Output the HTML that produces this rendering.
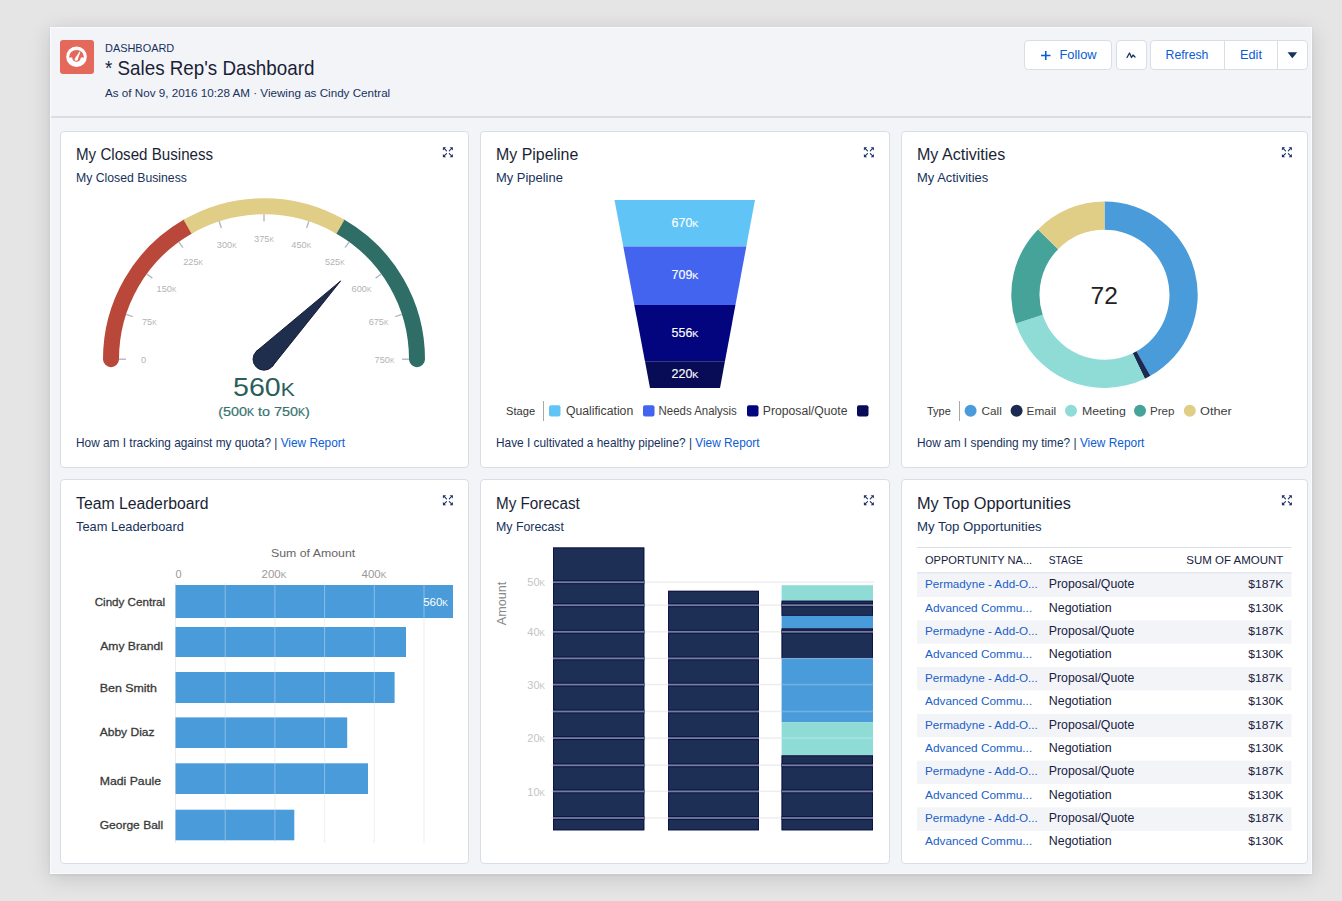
<!DOCTYPE html>
<html><head><meta charset="utf-8"><style>
html,body{margin:0;padding:0;}
body{width:1342px;height:901px;position:relative;overflow:hidden;background:#e6e5e5;font-family:"Liberation Sans", sans-serif;}
svg text{font-family:"Liberation Sans", sans-serif;}
</style></head><body>
<div style="position:absolute;left:50px;top:27px;width:1262px;height:847px;background:#f3f4f8;box-shadow:0 4px 20px rgba(0,0,0,0.15), 0 1px 3px rgba(0,0,0,0.06);border:1px solid #fafbfd;box-sizing:border-box;"></div><div style="position:absolute;left:51px;top:116px;width:1260px;height:2px;background:#d8dde6;"></div><div style="position:absolute;left:51px;top:118px;width:1260px;height:755px;background:#f2f4f7;"></div><div style="position:absolute;left:60px;top:40px;width:34px;height:34px;background:#e4695b;border-radius:3px;"></div><div style="position:absolute;left:1024px;top:40px;width:88px;height:30px;background:#fff;border:1px solid #d8dde6;border-radius:4px;box-sizing:border-box;"></div><div style="position:absolute;left:1116px;top:40px;width:31px;height:30px;background:#fff;border:1px solid #d8dde6;border-radius:4px;box-sizing:border-box;"></div><div style="position:absolute;left:1150px;top:40px;width:158px;height:30px;background:#fff;border:1px solid #d8dde6;border-radius:4px;box-sizing:border-box;"></div><div style="position:absolute;left:1224px;top:40px;width:1px;height:30px;background:#d8dde6;"></div><div style="position:absolute;left:1277px;top:40px;width:1px;height:30px;background:#d8dde6;"></div><div style="position:absolute;left:60px;top:131px;width:409px;height:337px;background:#fff;border:1px solid #d8dde6;border-radius:4px;box-sizing:border-box;"></div><div style="position:absolute;left:480px;top:131px;width:410px;height:337px;background:#fff;border:1px solid #d8dde6;border-radius:4px;box-sizing:border-box;"></div><div style="position:absolute;left:901px;top:131px;width:407px;height:337px;background:#fff;border:1px solid #d8dde6;border-radius:4px;box-sizing:border-box;"></div><div style="position:absolute;left:60px;top:479px;width:409px;height:385px;background:#fff;border:1px solid #d8dde6;border-radius:4px;box-sizing:border-box;"></div><div style="position:absolute;left:480px;top:479px;width:410px;height:385px;background:#fff;border:1px solid #d8dde6;border-radius:4px;box-sizing:border-box;"></div><div style="position:absolute;left:901px;top:479px;width:407px;height:385px;background:#fff;border:1px solid #d8dde6;border-radius:4px;box-sizing:border-box;"></div><div style="position:absolute;left:543px;top:401px;width:1px;height:20px;background:#a8a8a8;"></div><div style="position:absolute;left:959px;top:401px;width:1px;height:20px;background:#a8a8a8;"></div>
<svg width="1342" height="901" viewBox="0 0 1342 901" style="position:absolute;left:0;top:0">
<circle cx="76.5" cy="56.8" r="10.3" fill="#fff"/><path d="M69 57.4 A7.5 7.5 0 0 1 84 57.4 Z" fill="#e4695b"/><circle cx="76.5" cy="57.5" r="4.3" fill="#e4695b"/><path d="M74.87 58.51 L79.64 51.62 L80.36 51.98 L77.53 59.89 Z" fill="#fff"/><circle cx="76.2" cy="59.2" r="1.5" fill="#fff"/><text x="105.00" y="52.30" font-size="10.8" fill="#16325c" text-anchor="start" font-weight="normal" textLength="69.26" lengthAdjust="spacingAndGlyphs" >DASHBOARD</text><text x="105.00" y="75.00" font-size="19.8" fill="#1a1f36" text-anchor="start" font-weight="normal" textLength="209.39" lengthAdjust="spacingAndGlyphs" >* Sales Rep's Dashboard</text><text x="105.00" y="96.90" font-size="11.6" fill="#16325c" text-anchor="start" font-weight="normal" textLength="285.21" lengthAdjust="spacingAndGlyphs" >As of Nov 9, 2016 10:28 AM · Viewing as Cindy Central</text><path d="M1041 55.5 H1050.5 M1045.75 51 V60" stroke="#0b5cd5" stroke-width="1.6"/><text x="1059.50" y="58.60" font-size="12.4" fill="#0b5cd5" text-anchor="start" font-weight="normal" textLength="37.17" lengthAdjust="spacingAndGlyphs" >Follow</text><path d="M1127 57.5 L1129.5 53 L1131.5 57.5 L1133 55 L1135 57" stroke="#16325c" stroke-width="1.3" fill="none" stroke-linejoin="round" stroke-linecap="round"/><text x="1187.00" y="58.60" font-size="12.4" fill="#0b5cd5" text-anchor="middle" font-weight="normal" textLength="42.87" lengthAdjust="spacingAndGlyphs" >Refresh</text><text x="1251.00" y="58.60" font-size="12.4" fill="#0b5cd5" text-anchor="middle" font-weight="normal" textLength="21.87" lengthAdjust="spacingAndGlyphs" >Edit</text><path d="M1287.5 52.3 H1297.2 L1292.35 58.3 Z" fill="#16325c"/><text x="76.00" y="160.00" font-size="15.8" fill="#1a1f36" text-anchor="start" font-weight="normal" textLength="137.11" lengthAdjust="spacingAndGlyphs" >My Closed Business</text><text x="76.00" y="182.30" font-size="12.7" fill="#16325c" text-anchor="start" font-weight="normal" textLength="110.89" lengthAdjust="spacingAndGlyphs" >My Closed Business</text><path d="M446.50 150.80 L444.40 148.70" stroke="#1c2f66" stroke-width="1.1" stroke-linecap="round"/><path d="M442.90 147.20 L446.10 147.20 L442.90 150.40 Z" fill="#1c2f66"/><path d="M449.30 150.80 L451.40 148.70" stroke="#1c2f66" stroke-width="1.1" stroke-linecap="round"/><path d="M452.90 147.20 L449.70 147.20 L452.90 150.40 Z" fill="#1c2f66"/><path d="M446.50 153.60 L444.40 155.70" stroke="#1c2f66" stroke-width="1.1" stroke-linecap="round"/><path d="M442.90 157.20 L446.10 157.20 L442.90 154.00 Z" fill="#1c2f66"/><path d="M449.30 153.60 L451.40 155.70" stroke="#1c2f66" stroke-width="1.1" stroke-linecap="round"/><path d="M452.90 157.20 L449.70 157.20 L452.90 154.00 Z" fill="#1c2f66"/><text x="496.00" y="160.00" font-size="15.8" fill="#1a1f36" text-anchor="start" font-weight="normal" textLength="82.31" lengthAdjust="spacingAndGlyphs" >My Pipeline</text><text x="496.00" y="182.30" font-size="12.7" fill="#16325c" text-anchor="start" font-weight="normal" textLength="66.89" lengthAdjust="spacingAndGlyphs" >My Pipeline</text><path d="M867.50 150.80 L865.40 148.70" stroke="#1c2f66" stroke-width="1.1" stroke-linecap="round"/><path d="M863.90 147.20 L867.10 147.20 L863.90 150.40 Z" fill="#1c2f66"/><path d="M870.30 150.80 L872.40 148.70" stroke="#1c2f66" stroke-width="1.1" stroke-linecap="round"/><path d="M873.90 147.20 L870.70 147.20 L873.90 150.40 Z" fill="#1c2f66"/><path d="M867.50 153.60 L865.40 155.70" stroke="#1c2f66" stroke-width="1.1" stroke-linecap="round"/><path d="M863.90 157.20 L867.10 157.20 L863.90 154.00 Z" fill="#1c2f66"/><path d="M870.30 153.60 L872.40 155.70" stroke="#1c2f66" stroke-width="1.1" stroke-linecap="round"/><path d="M873.90 157.20 L870.70 157.20 L873.90 154.00 Z" fill="#1c2f66"/><text x="917.00" y="160.00" font-size="15.8" fill="#1a1f36" text-anchor="start" font-weight="normal" textLength="88.31" lengthAdjust="spacingAndGlyphs" >My Activities</text><text x="917.00" y="182.30" font-size="12.7" fill="#16325c" text-anchor="start" font-weight="normal" textLength="71.19" lengthAdjust="spacingAndGlyphs" >My Activities</text><path d="M1285.50 150.80 L1283.40 148.70" stroke="#1c2f66" stroke-width="1.1" stroke-linecap="round"/><path d="M1281.90 147.20 L1285.10 147.20 L1281.90 150.40 Z" fill="#1c2f66"/><path d="M1288.30 150.80 L1290.40 148.70" stroke="#1c2f66" stroke-width="1.1" stroke-linecap="round"/><path d="M1291.90 147.20 L1288.70 147.20 L1291.90 150.40 Z" fill="#1c2f66"/><path d="M1285.50 153.60 L1283.40 155.70" stroke="#1c2f66" stroke-width="1.1" stroke-linecap="round"/><path d="M1281.90 157.20 L1285.10 157.20 L1281.90 154.00 Z" fill="#1c2f66"/><path d="M1288.30 153.60 L1290.40 155.70" stroke="#1c2f66" stroke-width="1.1" stroke-linecap="round"/><path d="M1291.90 157.20 L1288.70 157.20 L1291.90 154.00 Z" fill="#1c2f66"/><text x="76.00" y="508.90" font-size="15.8" fill="#1a1f36" text-anchor="start" font-weight="normal" textLength="132.51" lengthAdjust="spacingAndGlyphs" >Team Leaderboard</text><text x="76.00" y="531.20" font-size="12.7" fill="#16325c" text-anchor="start" font-weight="normal" textLength="107.89" lengthAdjust="spacingAndGlyphs" >Team Leaderboard</text><path d="M446.50 498.80 L444.40 496.70" stroke="#1c2f66" stroke-width="1.1" stroke-linecap="round"/><path d="M442.90 495.20 L446.10 495.20 L442.90 498.40 Z" fill="#1c2f66"/><path d="M449.30 498.80 L451.40 496.70" stroke="#1c2f66" stroke-width="1.1" stroke-linecap="round"/><path d="M452.90 495.20 L449.70 495.20 L452.90 498.40 Z" fill="#1c2f66"/><path d="M446.50 501.60 L444.40 503.70" stroke="#1c2f66" stroke-width="1.1" stroke-linecap="round"/><path d="M442.90 505.20 L446.10 505.20 L442.90 502.00 Z" fill="#1c2f66"/><path d="M449.30 501.60 L451.40 503.70" stroke="#1c2f66" stroke-width="1.1" stroke-linecap="round"/><path d="M452.90 505.20 L449.70 505.20 L452.90 502.00 Z" fill="#1c2f66"/><text x="496.00" y="508.90" font-size="15.8" fill="#1a1f36" text-anchor="start" font-weight="normal" textLength="83.81" lengthAdjust="spacingAndGlyphs" >My Forecast</text><text x="496.00" y="531.20" font-size="12.7" fill="#16325c" text-anchor="start" font-weight="normal" textLength="67.99" lengthAdjust="spacingAndGlyphs" >My Forecast</text><path d="M867.50 498.80 L865.40 496.70" stroke="#1c2f66" stroke-width="1.1" stroke-linecap="round"/><path d="M863.90 495.20 L867.10 495.20 L863.90 498.40 Z" fill="#1c2f66"/><path d="M870.30 498.80 L872.40 496.70" stroke="#1c2f66" stroke-width="1.1" stroke-linecap="round"/><path d="M873.90 495.20 L870.70 495.20 L873.90 498.40 Z" fill="#1c2f66"/><path d="M867.50 501.60 L865.40 503.70" stroke="#1c2f66" stroke-width="1.1" stroke-linecap="round"/><path d="M863.90 505.20 L867.10 505.20 L863.90 502.00 Z" fill="#1c2f66"/><path d="M870.30 501.60 L872.40 503.70" stroke="#1c2f66" stroke-width="1.1" stroke-linecap="round"/><path d="M873.90 505.20 L870.70 505.20 L873.90 502.00 Z" fill="#1c2f66"/><text x="917.00" y="508.90" font-size="15.8" fill="#1a1f36" text-anchor="start" font-weight="normal" textLength="153.91" lengthAdjust="spacingAndGlyphs" >My Top Opportunities</text><text x="917.00" y="531.20" font-size="12.7" fill="#16325c" text-anchor="start" font-weight="normal" textLength="124.59" lengthAdjust="spacingAndGlyphs" >My Top Opportunities</text><path d="M1285.50 498.80 L1283.40 496.70" stroke="#1c2f66" stroke-width="1.1" stroke-linecap="round"/><path d="M1281.90 495.20 L1285.10 495.20 L1281.90 498.40 Z" fill="#1c2f66"/><path d="M1288.30 498.80 L1290.40 496.70" stroke="#1c2f66" stroke-width="1.1" stroke-linecap="round"/><path d="M1291.90 495.20 L1288.70 495.20 L1291.90 498.40 Z" fill="#1c2f66"/><path d="M1285.50 501.60 L1283.40 503.70" stroke="#1c2f66" stroke-width="1.1" stroke-linecap="round"/><path d="M1281.90 505.20 L1285.10 505.20 L1281.90 502.00 Z" fill="#1c2f66"/><path d="M1288.30 501.60 L1290.40 503.70" stroke="#1c2f66" stroke-width="1.1" stroke-linecap="round"/><path d="M1291.90 505.20 L1288.70 505.20 L1291.90 502.00 Z" fill="#1c2f66"/><path d="M111.00 359.20 A153 153 0 0 1 187.50 226.70" stroke="#b9483a" stroke-width="16" fill="none" stroke-linecap="round"/><path d="M340.50 226.70 A153 153 0 0 1 417.00 359.20" stroke="#2e6e67" stroke-width="16" fill="none" stroke-linecap="round"/><path d="M187.50 226.70 A153 153 0 0 1 340.50 226.70" stroke="#e0cd86" stroke-width="16" fill="none" stroke-linecap="butt"/><path d="M119.00 359.20 L126.00 359.20" stroke="#b4b7bf" stroke-width="1.4"/><text x="143.50" y="362.60" font-size="9.2" fill="#b3b3b3" text-anchor="middle" font-weight="normal"  >0</text><path d="M126.10 314.39 L132.75 316.56" stroke="#b4b7bf" stroke-width="1.4"/><text x="149.40" y="325.36" font-size="9.2" fill="#b3b3b3" text-anchor="middle" font-weight="normal"  >75<tspan font-size="6.81">K</tspan></text><path d="M146.69 273.97 L152.36 278.09" stroke="#b4b7bf" stroke-width="1.4"/><text x="166.51" y="291.77" font-size="9.2" fill="#b3b3b3" text-anchor="middle" font-weight="normal"  >150<tspan font-size="6.81">K</tspan></text><path d="M178.77 241.89 L182.89 247.56" stroke="#b4b7bf" stroke-width="1.4"/><text x="193.17" y="265.11" font-size="9.2" fill="#b3b3b3" text-anchor="middle" font-weight="normal"  >225<tspan font-size="6.81">K</tspan></text><path d="M219.19 221.30 L221.36 227.95" stroke="#b4b7bf" stroke-width="1.4"/><text x="226.76" y="248.00" font-size="9.2" fill="#b3b3b3" text-anchor="middle" font-weight="normal"  >300<tspan font-size="6.81">K</tspan></text><path d="M264.00 214.20 L264.00 221.20" stroke="#b4b7bf" stroke-width="1.4"/><text x="264.00" y="242.10" font-size="9.2" fill="#b3b3b3" text-anchor="middle" font-weight="normal"  >375<tspan font-size="6.81">K</tspan></text><path d="M308.81 221.30 L306.64 227.95" stroke="#b4b7bf" stroke-width="1.4"/><text x="301.24" y="248.00" font-size="9.2" fill="#b3b3b3" text-anchor="middle" font-weight="normal"  >450<tspan font-size="6.81">K</tspan></text><path d="M349.23 241.89 L345.11 247.56" stroke="#b4b7bf" stroke-width="1.4"/><text x="334.83" y="265.11" font-size="9.2" fill="#b3b3b3" text-anchor="middle" font-weight="normal"  >525<tspan font-size="6.81">K</tspan></text><path d="M381.31 273.97 L375.64 278.09" stroke="#b4b7bf" stroke-width="1.4"/><text x="361.49" y="291.77" font-size="9.2" fill="#b3b3b3" text-anchor="middle" font-weight="normal"  >600<tspan font-size="6.81">K</tspan></text><path d="M401.90 314.39 L395.25 316.56" stroke="#b4b7bf" stroke-width="1.4"/><text x="378.60" y="325.36" font-size="9.2" fill="#b3b3b3" text-anchor="middle" font-weight="normal"  >675<tspan font-size="6.81">K</tspan></text><path d="M409.00 359.20 L402.00 359.20" stroke="#b4b7bf" stroke-width="1.4"/><text x="384.50" y="362.60" font-size="9.2" fill="#b3b3b3" text-anchor="middle" font-weight="normal"  >750<tspan font-size="6.81">K</tspan></text><circle cx="264" cy="359.2" r="11" fill="#1f2e4d" stroke="#0e1430" stroke-width="0.9"/><path d="M271.86 366.90 L340.61 280.97 L256.14 351.50" fill="#1f2e4d" stroke="#0e1430" stroke-width="0.9" stroke-linejoin="round"/><circle cx="264" cy="359.2" r="10.55" fill="#1f2e4d"/><text x="264.00" y="396.40" font-size="26" fill="#2b5e5a" text-anchor="middle" font-weight="normal" textLength="61.82" lengthAdjust="spacingAndGlyphs" >560<tspan font-size="19.24">K</tspan></text><text x="264.00" y="416.40" font-size="13.6" fill="#36736f" text-anchor="middle" font-weight="normal" textLength="91.55" lengthAdjust="spacingAndGlyphs" stroke="#36736f" stroke-width="0.2">(500<tspan font-size="10.06">K</tspan> to 750<tspan font-size="10.06">K</tspan>)</text><text x="76" y="446.8" font-size="12.2" fill="#16325c" textLength="269" lengthAdjust="spacingAndGlyphs">How am I tracking against my quota? | <tspan fill="#0b5cd5">View Report</tspan></text><path d="M614.50 200 L755.00 200 L746.32 246.6 L623.30 246.6 Z" fill="#61c4f6"/><text x="685.00" y="226.70" font-size="12.8" fill="#ffffff" text-anchor="middle" font-weight="normal" textLength="26.90" lengthAdjust="spacingAndGlyphs" stroke="#ffffff" stroke-width="0.15">670<tspan font-size="9.47">K</tspan></text><path d="M623.30 246.6 L746.32 246.6 L735.45 305 L634.33 305 Z" fill="#4264ef"/><text x="685.00" y="279.20" font-size="12.8" fill="#ffffff" text-anchor="middle" font-weight="normal" textLength="26.90" lengthAdjust="spacingAndGlyphs" stroke="#ffffff" stroke-width="0.15">709<tspan font-size="9.47">K</tspan></text><path d="M634.33 305 L735.45 305 L724.97 361.3 L644.96 361.3 Z" fill="#03057f"/><text x="685.00" y="336.55" font-size="12.8" fill="#ffffff" text-anchor="middle" font-weight="normal" textLength="26.90" lengthAdjust="spacingAndGlyphs" stroke="#ffffff" stroke-width="0.15">556<tspan font-size="9.47">K</tspan></text><path d="M644.96 361.3 L724.97 361.3 L720.00 388 L650.00 388 Z" fill="#080b55"/><text x="685.00" y="378.05" font-size="12.8" fill="#ffffff" text-anchor="middle" font-weight="normal" textLength="26.90" lengthAdjust="spacingAndGlyphs" stroke="#ffffff" stroke-width="0.15">220<tspan font-size="9.47">K</tspan></text><text x="506.00" y="415.20" font-size="11" fill="#333333" text-anchor="start" font-weight="normal" textLength="29.07" lengthAdjust="spacingAndGlyphs" >Stage</text><rect x="549" y="405.3" width="11.5" height="11.3" rx="2" fill="#61c4f6"/><text x="565.90" y="415.20" font-size="12" fill="#3e3e3c" text-anchor="start" font-weight="normal" textLength="67.34" lengthAdjust="spacingAndGlyphs" >Qualification</text><rect x="643" y="405.3" width="11.5" height="11.3" rx="2" fill="#4264ef"/><text x="658.60" y="415.20" font-size="12" fill="#3e3e3c" text-anchor="start" font-weight="normal" textLength="78.14" lengthAdjust="spacingAndGlyphs" >Needs Analysis</text><rect x="747" y="405.3" width="11.5" height="11.3" rx="2" fill="#03057f"/><text x="762.80" y="415.20" font-size="12" fill="#3e3e3c" text-anchor="start" font-weight="normal" textLength="84.64" lengthAdjust="spacingAndGlyphs" >Proposal/Quote</text><rect x="857" y="405.3" width="11.5" height="11.3" rx="2" fill="#080b55"/><text x="496" y="446.8" font-size="12.2" fill="#16325c" textLength="263.6" lengthAdjust="spacingAndGlyphs">Have I cultivated a healthy pipeline? | <tspan fill="#0b5cd5">View Report</tspan></text><path d="M1104.50 201.50 A93.2 93.2 0 0 1 1150.39 375.82 L1136.51 351.27 A65 65 0 0 0 1104.50 229.70 Z" fill="#4a9bd9"/><path d="M1150.39 375.82 A93.2 93.2 0 0 1 1144.92 378.68 L1132.69 353.27 A65 65 0 0 0 1136.51 351.27 Z" fill="#1b2a50"/><path d="M1144.92 378.68 A93.2 93.2 0 0 1 1015.86 323.50 L1042.68 314.79 A65 65 0 0 0 1132.69 353.27 Z" fill="#8fdbd6"/><path d="M1015.86 323.50 A93.2 93.2 0 0 1 1038.03 229.38 L1058.14 249.14 A65 65 0 0 0 1042.68 314.79 Z" fill="#45a39a"/><path d="M1038.03 229.38 A93.2 93.2 0 0 1 1104.50 201.50 L1104.50 229.70 A65 65 0 0 0 1058.14 249.14 Z" fill="#e0cd86"/><text x="1104.20" y="303.70" font-size="23" fill="#222222" text-anchor="middle" font-weight="normal" textLength="27.21" lengthAdjust="spacingAndGlyphs" >72</text><text x="927.00" y="415.20" font-size="11" fill="#333333" text-anchor="start" font-weight="normal" textLength="23.77" lengthAdjust="spacingAndGlyphs" >Type</text><circle cx="970.6" cy="410.8" r="6" fill="#4a9bd9"/><text x="981.60" y="415.20" font-size="11.8" fill="#3e3e3c" text-anchor="start" font-weight="normal" textLength="20.23" lengthAdjust="spacingAndGlyphs" >Call</text><circle cx="1016.6" cy="410.8" r="6" fill="#1b2a50"/><text x="1026.60" y="415.20" font-size="11.8" fill="#3e3e3c" text-anchor="start" font-weight="normal" textLength="29.63" lengthAdjust="spacingAndGlyphs" >Email</text><circle cx="1071" cy="410.8" r="6" fill="#8fdbd6"/><text x="1082.00" y="415.20" font-size="11.8" fill="#3e3e3c" text-anchor="start" font-weight="normal" textLength="43.83" lengthAdjust="spacingAndGlyphs" >Meeting</text><circle cx="1140" cy="410.8" r="6" fill="#45a39a"/><text x="1149.90" y="415.20" font-size="11.8" fill="#3e3e3c" text-anchor="start" font-weight="normal" textLength="24.53" lengthAdjust="spacingAndGlyphs" >Prep</text><circle cx="1189.8" cy="410.8" r="6" fill="#e0cd86"/><text x="1200.00" y="415.20" font-size="11.8" fill="#3e3e3c" text-anchor="start" font-weight="normal" textLength="31.83" lengthAdjust="spacingAndGlyphs" >Other</text><text x="917" y="446.8" font-size="12.2" fill="#16325c" textLength="227.4" lengthAdjust="spacingAndGlyphs">How am I spending my time? | <tspan fill="#0b5cd5">View Report</tspan></text><text x="313.10" y="557.00" font-size="11.8" fill="#666666" text-anchor="middle" font-weight="normal" textLength="84.23" lengthAdjust="spacingAndGlyphs" >Sum of Amount</text><text x="178.50" y="577.80" font-size="11" fill="#999999" text-anchor="middle" font-weight="normal"  >0</text><text x="274.00" y="577.80" font-size="11.5" fill="#999999" text-anchor="middle" font-weight="normal"  >200<tspan font-size="8.51">K</tspan></text><text x="374.00" y="577.80" font-size="11.5" fill="#999999" text-anchor="middle" font-weight="normal"  >400<tspan font-size="8.51">K</tspan></text><rect x="175.00" y="583" width="1" height="260" fill="#ececec"/><rect x="224.70" y="583" width="1" height="260" fill="#ececec"/><rect x="274.40" y="583" width="1" height="260" fill="#ececec"/><rect x="324.10" y="583" width="1" height="260" fill="#ececec"/><rect x="373.80" y="583" width="1" height="260" fill="#ececec"/><rect x="423.50" y="583" width="1" height="260" fill="#ececec"/><rect x="175.5" y="585" width="277.50" height="33.00" fill="#4a9bd9"/><text x="94.70" y="606.30" font-size="11.6" fill="#3a3a3a" text-anchor="start" font-weight="normal" textLength="70.41" lengthAdjust="spacingAndGlyphs" stroke="#3a3a3a" stroke-width="0.3">Cindy Central</text><rect x="175.5" y="627" width="230.50" height="30.00" fill="#4a9bd9"/><text x="100.20" y="649.50" font-size="11.6" fill="#3a3a3a" text-anchor="start" font-weight="normal" textLength="62.81" lengthAdjust="spacingAndGlyphs" stroke="#3a3a3a" stroke-width="0.3">Amy Brandl</text><rect x="175.5" y="672" width="219.10" height="31.00" fill="#4a9bd9"/><text x="99.70" y="692.10" font-size="11.6" fill="#3a3a3a" text-anchor="start" font-weight="normal" textLength="57.31" lengthAdjust="spacingAndGlyphs" stroke="#3a3a3a" stroke-width="0.3">Ben Smith</text><rect x="175.5" y="717.4" width="171.70" height="30.60" fill="#4a9bd9"/><text x="99.70" y="736.40" font-size="11.6" fill="#3a3a3a" text-anchor="start" font-weight="normal" textLength="54.91" lengthAdjust="spacingAndGlyphs" stroke="#3a3a3a" stroke-width="0.3">Abby Diaz</text><rect x="175.5" y="763.3" width="192.50" height="30.70" fill="#4a9bd9"/><text x="99.70" y="785.30" font-size="11.6" fill="#3a3a3a" text-anchor="start" font-weight="normal" textLength="61.31" lengthAdjust="spacingAndGlyphs" stroke="#3a3a3a" stroke-width="0.3">Madi Paule</text><rect x="175.5" y="809.7" width="118.80" height="30.60" fill="#4a9bd9"/><text x="99.70" y="829.00" font-size="11.6" fill="#3a3a3a" text-anchor="start" font-weight="normal" textLength="63.51" lengthAdjust="spacingAndGlyphs" stroke="#3a3a3a" stroke-width="0.3">George Ball</text><rect x="224.70" y="583" width="1" height="260" fill="rgba(255,255,255,0.35)"/><rect x="274.40" y="583" width="1" height="260" fill="rgba(255,255,255,0.35)"/><rect x="324.10" y="583" width="1" height="260" fill="rgba(255,255,255,0.35)"/><rect x="373.80" y="583" width="1" height="260" fill="rgba(255,255,255,0.35)"/><rect x="423.50" y="583" width="1" height="260" fill="rgba(255,255,255,0.35)"/><text x="448.00" y="606.00" font-size="11.5" fill="#ffffff" text-anchor="end" font-weight="normal"  >560<tspan font-size="8.51">K</tspan></text><rect x="551" y="581.40" width="323" height="1.5" fill="#eeeeee"/><rect x="551" y="604.40" width="323" height="1.5" fill="#eeeeee"/><rect x="551" y="631.00" width="323" height="1.5" fill="#eeeeee"/><rect x="551" y="657.60" width="323" height="1.5" fill="#eeeeee"/><rect x="551" y="683.80" width="323" height="1.5" fill="#eeeeee"/><rect x="551" y="710.70" width="323" height="1.5" fill="#eeeeee"/><rect x="551" y="737.30" width="323" height="1.5" fill="#eeeeee"/><rect x="551" y="764.50" width="323" height="1.5" fill="#eeeeee"/><rect x="551" y="790.60" width="323" height="1.5" fill="#eeeeee"/><rect x="551" y="817.20" width="323" height="1.5" fill="#eeeeee"/><text x="545.00" y="586.40" font-size="11" fill="#c3c3c3" text-anchor="end" font-weight="normal"  >50<tspan font-size="8.14">K</tspan></text><text x="545.00" y="636.00" font-size="11" fill="#c3c3c3" text-anchor="end" font-weight="normal"  >40<tspan font-size="8.14">K</tspan></text><text x="545.00" y="688.80" font-size="11" fill="#c3c3c3" text-anchor="end" font-weight="normal"  >30<tspan font-size="8.14">K</tspan></text><text x="545.00" y="742.30" font-size="11" fill="#c3c3c3" text-anchor="end" font-weight="normal"  >20<tspan font-size="8.14">K</tspan></text><text x="545.00" y="795.60" font-size="11" fill="#c3c3c3" text-anchor="end" font-weight="normal"  >10<tspan font-size="8.14">K</tspan></text><text x="0" y="0" font-size="12.3" fill="#888888" text-anchor="middle" textLength="43.5" lengthAdjust="spacingAndGlyphs" transform="translate(505.5 603.5) rotate(-90)">Amount</text><rect x="553" y="547.5" width="91.30" height="282.80" fill="#1e2f56"/><rect x="553.50" y="548.00" width="90.30" height="281.80" fill="none" stroke="#0d1548" stroke-width="1"/><rect x="668" y="590.8" width="91.00" height="239.50" fill="#1e2f56"/><rect x="668.50" y="591.30" width="90.00" height="238.50" fill="none" stroke="#0d1548" stroke-width="1"/><rect x="781.6" y="585.2" width="91.40" height="15.50" fill="#8fdbd6"/><rect x="781.6" y="600.7" width="91.40" height="15.20" fill="#1e2f56"/><rect x="782.10" y="601.20" width="90.40" height="14.20" fill="none" stroke="#0d1548" stroke-width="1"/><rect x="781.6" y="615.9" width="91.40" height="12.50" fill="#4a9bd9"/><rect x="781.6" y="628.4" width="91.40" height="29.90" fill="#1e2f56"/><rect x="782.10" y="628.90" width="90.40" height="28.90" fill="none" stroke="#0d1548" stroke-width="1"/><rect x="781.6" y="658.3" width="91.40" height="64.00" fill="#4a9bd9"/><rect x="781.6" y="722.3" width="91.40" height="33.10" fill="#8fdbd6"/><rect x="781.6" y="755.4" width="91.40" height="74.90" fill="#1e2f56"/><rect x="782.10" y="755.90" width="90.40" height="73.90" fill="none" stroke="#0d1548" stroke-width="1"/><rect x="553" y="580.20" width="91.30" height="4" fill="#0d1548"/><rect x="553" y="581.30" width="91.30" height="1.8" fill="#747e98"/><rect x="553" y="603.20" width="91.30" height="4" fill="#0d1548"/><rect x="553" y="604.30" width="91.30" height="1.8" fill="#747e98"/><rect x="668" y="603.20" width="91.00" height="4" fill="#0d1548"/><rect x="668" y="604.30" width="91.00" height="1.8" fill="#747e98"/><rect x="781.6" y="603.20" width="91.40" height="4" fill="#0d1548"/><rect x="781.6" y="604.30" width="91.40" height="1.8" fill="#747e98"/><rect x="553" y="629.80" width="91.30" height="4" fill="#0d1548"/><rect x="553" y="630.90" width="91.30" height="1.8" fill="#747e98"/><rect x="668" y="629.80" width="91.00" height="4" fill="#0d1548"/><rect x="668" y="630.90" width="91.00" height="1.8" fill="#747e98"/><rect x="781.6" y="629.80" width="91.40" height="4" fill="#0d1548"/><rect x="781.6" y="630.90" width="91.40" height="1.8" fill="#747e98"/><rect x="553" y="656.40" width="91.30" height="4" fill="#0d1548"/><rect x="553" y="657.50" width="91.30" height="1.8" fill="#747e98"/><rect x="668" y="656.40" width="91.00" height="4" fill="#0d1548"/><rect x="668" y="657.50" width="91.00" height="1.8" fill="#747e98"/><rect x="781.6" y="657.60" width="91.40" height="1.6" fill="rgba(255,255,255,0.22)"/><rect x="553" y="682.60" width="91.30" height="4" fill="#0d1548"/><rect x="553" y="683.70" width="91.30" height="1.8" fill="#747e98"/><rect x="668" y="682.60" width="91.00" height="4" fill="#0d1548"/><rect x="668" y="683.70" width="91.00" height="1.8" fill="#747e98"/><rect x="781.6" y="683.80" width="91.40" height="1.6" fill="rgba(255,255,255,0.22)"/><rect x="553" y="709.50" width="91.30" height="4" fill="#0d1548"/><rect x="553" y="710.60" width="91.30" height="1.8" fill="#747e98"/><rect x="668" y="709.50" width="91.00" height="4" fill="#0d1548"/><rect x="668" y="710.60" width="91.00" height="1.8" fill="#747e98"/><rect x="781.6" y="710.70" width="91.40" height="1.6" fill="rgba(255,255,255,0.22)"/><rect x="553" y="736.10" width="91.30" height="4" fill="#0d1548"/><rect x="553" y="737.20" width="91.30" height="1.8" fill="#747e98"/><rect x="668" y="736.10" width="91.00" height="4" fill="#0d1548"/><rect x="668" y="737.20" width="91.00" height="1.8" fill="#747e98"/><rect x="781.6" y="737.30" width="91.40" height="1.6" fill="rgba(255,255,255,0.22)"/><rect x="553" y="763.30" width="91.30" height="4" fill="#0d1548"/><rect x="553" y="764.40" width="91.30" height="1.8" fill="#747e98"/><rect x="668" y="763.30" width="91.00" height="4" fill="#0d1548"/><rect x="668" y="764.40" width="91.00" height="1.8" fill="#747e98"/><rect x="781.6" y="763.30" width="91.40" height="4" fill="#0d1548"/><rect x="781.6" y="764.40" width="91.40" height="1.8" fill="#747e98"/><rect x="553" y="789.40" width="91.30" height="4" fill="#0d1548"/><rect x="553" y="790.50" width="91.30" height="1.8" fill="#747e98"/><rect x="668" y="789.40" width="91.00" height="4" fill="#0d1548"/><rect x="668" y="790.50" width="91.00" height="1.8" fill="#747e98"/><rect x="781.6" y="789.40" width="91.40" height="4" fill="#0d1548"/><rect x="781.6" y="790.50" width="91.40" height="1.8" fill="#747e98"/><rect x="553" y="816.00" width="91.30" height="4" fill="#0d1548"/><rect x="553" y="817.10" width="91.30" height="1.8" fill="#747e98"/><rect x="668" y="816.00" width="91.00" height="4" fill="#0d1548"/><rect x="668" y="817.10" width="91.00" height="1.8" fill="#747e98"/><rect x="781.6" y="816.00" width="91.40" height="4" fill="#0d1548"/><rect x="781.6" y="817.10" width="91.40" height="1.8" fill="#747e98"/><rect x="917" y="547" width="374.5" height="1" fill="#d8dde6"/><rect x="917" y="572.3" width="374.5" height="1.4" fill="#d8dde6"/><text x="925.00" y="564.30" font-size="11" fill="#16213e" text-anchor="start" font-weight="normal" textLength="107.17" lengthAdjust="spacingAndGlyphs" >OPPORTUNITY NA...</text><text x="1048.80" y="564.30" font-size="10.6" fill="#16213e" text-anchor="start" font-weight="normal" textLength="33.94" lengthAdjust="spacingAndGlyphs" >STAGE</text><text x="1283.30" y="564.30" font-size="11.2" fill="#16213e" text-anchor="end" font-weight="normal" textLength="97.08" lengthAdjust="spacingAndGlyphs" >SUM OF AMOUNT</text><rect x="917" y="573.50" width="374.5" height="23.39" fill="#f3f4f8"/><text x="925.00" y="588.20" font-size="11.6" fill="#1b5fc7" text-anchor="start" font-weight="normal" textLength="112.81" lengthAdjust="spacingAndGlyphs" >Permadyne - Add-O...</text><text x="1048.80" y="588.20" font-size="12.1" fill="#16213e" text-anchor="start" font-weight="normal" textLength="85.55" lengthAdjust="spacingAndGlyphs" >Proposal/Quote</text><text x="1283.30" y="588.20" font-size="11.8" fill="#16213e" text-anchor="end" font-weight="normal" textLength="35.13" lengthAdjust="spacingAndGlyphs" >$187K</text><text x="925.00" y="611.59" font-size="11.6" fill="#1b5fc7" text-anchor="start" font-weight="normal" textLength="107.21" lengthAdjust="spacingAndGlyphs" >Advanced Commu...</text><text x="1048.80" y="611.59" font-size="12.1" fill="#16213e" text-anchor="start" font-weight="normal" textLength="62.85" lengthAdjust="spacingAndGlyphs" >Negotiation</text><text x="1283.30" y="611.59" font-size="11.8" fill="#16213e" text-anchor="end" font-weight="normal" textLength="35.13" lengthAdjust="spacingAndGlyphs" >$130K</text><rect x="917" y="620.28" width="374.5" height="23.39" fill="#f3f4f8"/><text x="925.00" y="634.98" font-size="11.6" fill="#1b5fc7" text-anchor="start" font-weight="normal" textLength="112.81" lengthAdjust="spacingAndGlyphs" >Permadyne - Add-O...</text><text x="1048.80" y="634.98" font-size="12.1" fill="#16213e" text-anchor="start" font-weight="normal" textLength="85.55" lengthAdjust="spacingAndGlyphs" >Proposal/Quote</text><text x="1283.30" y="634.98" font-size="11.8" fill="#16213e" text-anchor="end" font-weight="normal" textLength="35.13" lengthAdjust="spacingAndGlyphs" >$187K</text><text x="925.00" y="658.37" font-size="11.6" fill="#1b5fc7" text-anchor="start" font-weight="normal" textLength="107.21" lengthAdjust="spacingAndGlyphs" >Advanced Commu...</text><text x="1048.80" y="658.37" font-size="12.1" fill="#16213e" text-anchor="start" font-weight="normal" textLength="62.85" lengthAdjust="spacingAndGlyphs" >Negotiation</text><text x="1283.30" y="658.37" font-size="11.8" fill="#16213e" text-anchor="end" font-weight="normal" textLength="35.13" lengthAdjust="spacingAndGlyphs" >$130K</text><rect x="917" y="667.06" width="374.5" height="23.39" fill="#f3f4f8"/><text x="925.00" y="681.76" font-size="11.6" fill="#1b5fc7" text-anchor="start" font-weight="normal" textLength="112.81" lengthAdjust="spacingAndGlyphs" >Permadyne - Add-O...</text><text x="1048.80" y="681.76" font-size="12.1" fill="#16213e" text-anchor="start" font-weight="normal" textLength="85.55" lengthAdjust="spacingAndGlyphs" >Proposal/Quote</text><text x="1283.30" y="681.76" font-size="11.8" fill="#16213e" text-anchor="end" font-weight="normal" textLength="35.13" lengthAdjust="spacingAndGlyphs" >$187K</text><text x="925.00" y="705.15" font-size="11.6" fill="#1b5fc7" text-anchor="start" font-weight="normal" textLength="107.21" lengthAdjust="spacingAndGlyphs" >Advanced Commu...</text><text x="1048.80" y="705.15" font-size="12.1" fill="#16213e" text-anchor="start" font-weight="normal" textLength="62.85" lengthAdjust="spacingAndGlyphs" >Negotiation</text><text x="1283.30" y="705.15" font-size="11.8" fill="#16213e" text-anchor="end" font-weight="normal" textLength="35.13" lengthAdjust="spacingAndGlyphs" >$130K</text><rect x="917" y="713.84" width="374.5" height="23.39" fill="#f3f4f8"/><text x="925.00" y="728.54" font-size="11.6" fill="#1b5fc7" text-anchor="start" font-weight="normal" textLength="112.81" lengthAdjust="spacingAndGlyphs" >Permadyne - Add-O...</text><text x="1048.80" y="728.54" font-size="12.1" fill="#16213e" text-anchor="start" font-weight="normal" textLength="85.55" lengthAdjust="spacingAndGlyphs" >Proposal/Quote</text><text x="1283.30" y="728.54" font-size="11.8" fill="#16213e" text-anchor="end" font-weight="normal" textLength="35.13" lengthAdjust="spacingAndGlyphs" >$187K</text><text x="925.00" y="751.93" font-size="11.6" fill="#1b5fc7" text-anchor="start" font-weight="normal" textLength="107.21" lengthAdjust="spacingAndGlyphs" >Advanced Commu...</text><text x="1048.80" y="751.93" font-size="12.1" fill="#16213e" text-anchor="start" font-weight="normal" textLength="62.85" lengthAdjust="spacingAndGlyphs" >Negotiation</text><text x="1283.30" y="751.93" font-size="11.8" fill="#16213e" text-anchor="end" font-weight="normal" textLength="35.13" lengthAdjust="spacingAndGlyphs" >$130K</text><rect x="917" y="760.62" width="374.5" height="23.39" fill="#f3f4f8"/><text x="925.00" y="775.32" font-size="11.6" fill="#1b5fc7" text-anchor="start" font-weight="normal" textLength="112.81" lengthAdjust="spacingAndGlyphs" >Permadyne - Add-O...</text><text x="1048.80" y="775.32" font-size="12.1" fill="#16213e" text-anchor="start" font-weight="normal" textLength="85.55" lengthAdjust="spacingAndGlyphs" >Proposal/Quote</text><text x="1283.30" y="775.32" font-size="11.8" fill="#16213e" text-anchor="end" font-weight="normal" textLength="35.13" lengthAdjust="spacingAndGlyphs" >$187K</text><text x="925.00" y="798.71" font-size="11.6" fill="#1b5fc7" text-anchor="start" font-weight="normal" textLength="107.21" lengthAdjust="spacingAndGlyphs" >Advanced Commu...</text><text x="1048.80" y="798.71" font-size="12.1" fill="#16213e" text-anchor="start" font-weight="normal" textLength="62.85" lengthAdjust="spacingAndGlyphs" >Negotiation</text><text x="1283.30" y="798.71" font-size="11.8" fill="#16213e" text-anchor="end" font-weight="normal" textLength="35.13" lengthAdjust="spacingAndGlyphs" >$130K</text><rect x="917" y="807.40" width="374.5" height="23.39" fill="#f3f4f8"/><text x="925.00" y="822.10" font-size="11.6" fill="#1b5fc7" text-anchor="start" font-weight="normal" textLength="112.81" lengthAdjust="spacingAndGlyphs" >Permadyne - Add-O...</text><text x="1048.80" y="822.10" font-size="12.1" fill="#16213e" text-anchor="start" font-weight="normal" textLength="85.55" lengthAdjust="spacingAndGlyphs" >Proposal/Quote</text><text x="1283.30" y="822.10" font-size="11.8" fill="#16213e" text-anchor="end" font-weight="normal" textLength="35.13" lengthAdjust="spacingAndGlyphs" >$187K</text><text x="925.00" y="845.49" font-size="11.6" fill="#1b5fc7" text-anchor="start" font-weight="normal" textLength="107.21" lengthAdjust="spacingAndGlyphs" >Advanced Commu...</text><text x="1048.80" y="845.49" font-size="12.1" fill="#16213e" text-anchor="start" font-weight="normal" textLength="62.85" lengthAdjust="spacingAndGlyphs" >Negotiation</text><text x="1283.30" y="845.49" font-size="11.8" fill="#16213e" text-anchor="end" font-weight="normal" textLength="35.13" lengthAdjust="spacingAndGlyphs" >$130K</text>
</svg>
</body></html>
